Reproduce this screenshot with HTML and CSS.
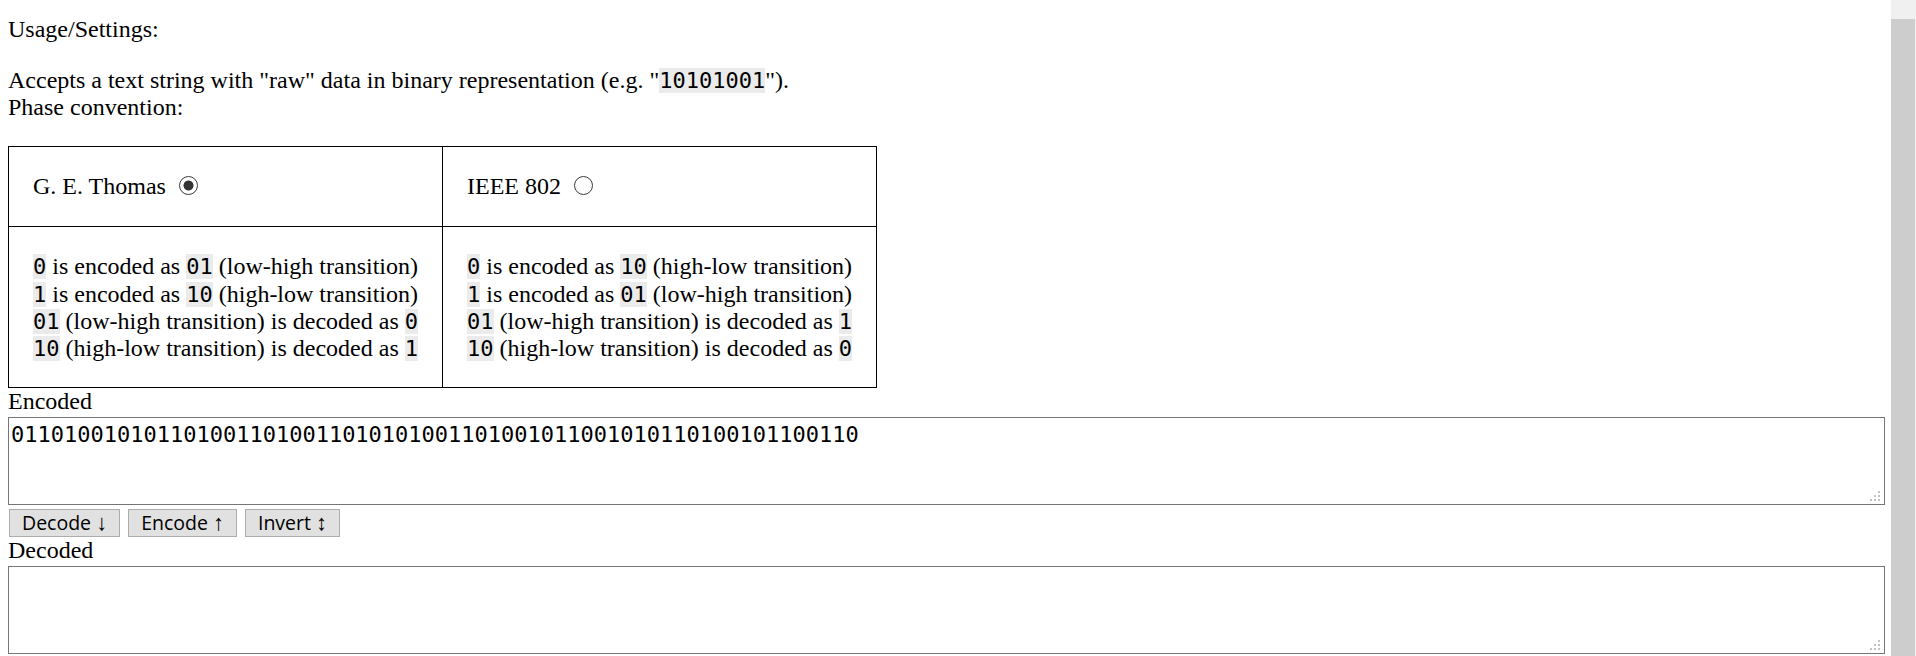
FILE: index.html
```html
<!DOCTYPE html>
<html lang="en">
<head>
<meta charset="utf-8">
<title>Manchester code</title>
<link rel="stylesheet" href="styles.css">
</head>
<body>
<div class="viewport">
  <main class="page">
    <p class="para">Usage/Settings:</p>
    <p class="para intro">Accepts a text string with "raw" data in binary representation (e.g. "<code class="code">10101001</code>").<br>Phase convention:</p>
    <table class="conv">
      <tr>
        <td class="cell head"><label class="choice">G. E. Thomas <input type="radio" name="conv" class="radio" checked></label></td>
        <td class="cell head"><label class="choice">IEEE 802 <input type="radio" name="conv" class="radio"></label></td>
      </tr>
      <tr>
        <td class="cell body"><code class="code">0</code> is encoded as <code class="code">01</code> (low-high transition)<br><code class="code">1</code> is encoded as <code class="code">10</code> (high-low transition)<br><code class="code">01</code> (low-high transition) is decoded as <code class="code">0</code><br><code class="code">10</code> (high-low transition) is decoded as <code class="code">1</code></td>
        <td class="cell body"><code class="code">0</code> is encoded as <code class="code">10</code> (high-low transition)<br><code class="code">1</code> is encoded as <code class="code">01</code> (low-high transition)<br><code class="code">01</code> (low-high transition) is decoded as <code class="code">1</code><br><code class="code">10</code> (high-low transition) is decoded as <code class="code">0</code></td>
      </tr>
    </table>
    <div class="label">Encoded</div>
    <textarea class="box">0110100101011010011010011010101001101001011001010110100101100110</textarea>
    <div class="buttons">
      <button class="btn" type="button">Decode <span class="arrow">↓</span></button>
      <button class="btn" type="button">Encode <span class="arrow">↑</span></button>
      <button class="btn" type="button">Invert <span class="arrow">↕</span></button>
    </div>
    <div class="label">Decoded</div>
    <textarea class="box"></textarea>
  </main>
  <div class="scrollbar"><div class="thumb"></div></div>
</div>
</body>
</html>
```

FILE: styles.css
```css
html, body {
  margin: 0;
  padding: 0;
  background: #fff;
}

body {
  font-family: "Liberation Serif", "Times New Roman", serif;
  font-size: 24px;
  color: #000;
}

.viewport {
  display: flex;
  height: 100vh;
  overflow: hidden;
}

.page {
  flex: 1;
  min-width: 0;
  padding: 16px 7px 0 8px;
}

.scrollbar {
  flex: none;
  width: 25px;
  background: #f0f0f0;
  display: flex;
  flex-direction: column;
}

.thumb {
  margin-top: 19px;
  flex: 1;
  width: 24px;
  background: #cdcdcd;
}

.para {
  margin: 0 0 24px 0;
}

.intro {
  margin-bottom: 25px;
}

.code {
  font-family: "DejaVu Sans Mono", "Liberation Mono", monospace;
  font-size: 22px;
  line-height: 1.24;
  background: #ebebeb;
}

.conv {
  border-collapse: collapse;
}

.cell {
  border: 1px solid #000;
  padding: 24px;
  text-align: left;
  vertical-align: middle;
}

.head {
  padding-top: 26px;
  padding-bottom: 26px;
}

.body {
  padding-top: 26px;
  padding-bottom: 25px;
}

.choice {
  white-space: nowrap;
}

.radio {
  -webkit-appearance: none;
  appearance: none;
  box-sizing: border-box;
  width: 19px;
  height: 19px;
  margin: 0 4px 0 7px;
  border: 1px solid #3b3b3b;
  border-radius: 50%;
  background: #fff;
  vertical-align: -1px;
}

.radio:checked {
  background: radial-gradient(circle, #333 0, #333 4.6px, #fff 5.4px);
}

.label {
  line-height: normal;
}

.box {
  display: block;
  box-sizing: border-box;
  width: calc(100% + 1px);
  height: 88px;
  margin: 2px 0 0 0;
  padding: 4px 2px 2px 2px;
  border: 1px solid #767676;
  border-radius: 0;
  font-family: "DejaVu Sans Mono", "Liberation Mono", monospace;
  font-size: 22px;
  color: #000;
  resize: none;
  outline: none;
  background:
    linear-gradient(#c3c3c3, #c3c3c3) right 4px bottom 11px / 2px 2px no-repeat,
    linear-gradient(#c3c3c3, #c3c3c3) right 4px bottom 7px / 2px 2px no-repeat,
    linear-gradient(#c3c3c3, #c3c3c3) right 8px bottom 7px / 2px 2px no-repeat,
    linear-gradient(#c3c3c3, #c3c3c3) right 4px bottom 3px / 2px 2px no-repeat,
    linear-gradient(#c3c3c3, #c3c3c3) right 8px bottom 3px / 2px 2px no-repeat,
    linear-gradient(#c3c3c3, #c3c3c3) right 12px bottom 3px / 2px 2px no-repeat,
    #fff;
}

.buttons {
  display: flex;
  gap: 8px;
  margin-top: 4px;
  padding-left: 1px;
  height: 28px;
}

.btn {
  box-sizing: border-box;
  height: 28px;
  margin: 0;
  padding: 0 12px;
  border: 1px solid #adadad;
  border-radius: 0;
  background: #e1e1e1;
  color: #000;
  font-family: "Open Sans", "Liberation Sans", sans-serif;
  font-size: 19.5px;
  line-height: 26px;
}

.arrow {
  font-family: "Liberation Sans", sans-serif;
  font-size: 22px;
}
```
